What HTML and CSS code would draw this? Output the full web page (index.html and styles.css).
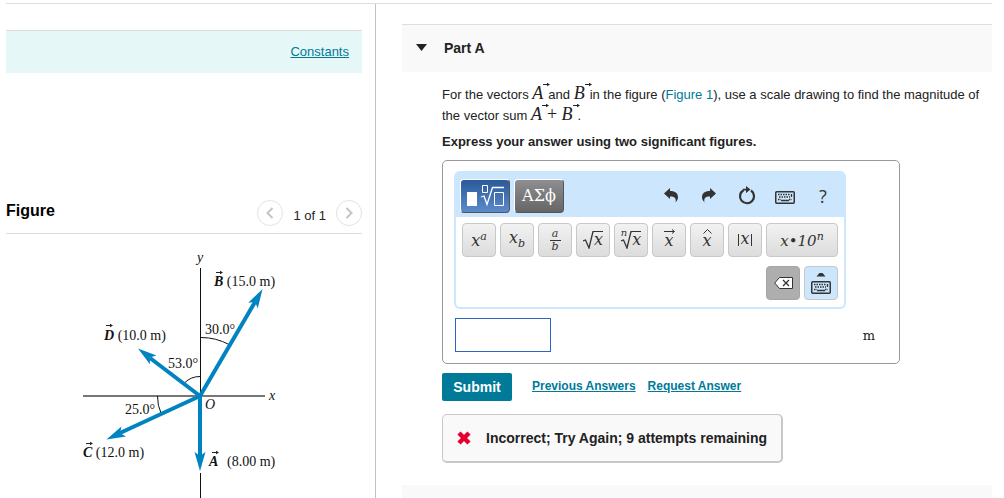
FILE: index.html
```
<!DOCTYPE html>
<html lang="en">
<head>
    <meta charset="UTF-8">
    <title>Part A</title>
    <link rel="stylesheet" href="styles.css">
</head>
<body>
    <svg class="symbols" aria-hidden="true">
        <symbol id="keyboard" viewBox="0 0 20 13">
            <rect x="0.75" y="0.75" width="18.5" height="11.5" rx="1" fill="none" stroke="#333" stroke-width="1.5"/>
            <path d="M3 3.5h12M4 6h11M3 8.5h3M14 8.5h3" stroke="#333" stroke-width="1.5" stroke-dasharray="1.5 1"/>
            <path d="M6 9.5h8M16.5 3v3" stroke="#333" stroke-width="1.3"/>
        </symbol>
        <symbol id="undo" viewBox="0 0 14 15">
            <path d="M0 5.5 6 0v3c5.500 0 8 2.300 8 6.300 0 2-1 3.700-2.700 5.200.6-1.200.6-2.400.2-3.500C10.800 9.200 9 8.600 6 8.600V11z" fill="#333"/>
        </symbol>
        <symbol id="overarrow" viewBox="0 0 7 5">
            <path d="M0 2.500h6" stroke="#222" stroke-width="1" fill="none"/>
            <path d="M4 .8 7 2.500 4 4.200z" fill="#222"/>
        </symbol>
    </svg>

    <div class="page">
        <div class="left">
            <div class="toolbar"><a href="#constants">Constants</a></div>
            <div class="figureHeader">
                <h2>Figure</h2>
                <div class="pager">
                    <button type="button" aria-label="Previous figure"><svg width="8" height="12" viewBox="0 0 8 12"><path d="M6.500 1 1.500 6l5 5"/></svg></button>
                    <span>1 of 1</span>
                    <button type="button" aria-label="Next figure"><svg width="8" height="12" viewBox="0 0 8 12"><path d="M1.500 1l5 5-5 5"/></svg></button>
                </div>
            </div>
            <svg class="figure" id="figure1" width="220" height="264" viewBox="70 234 220 264" role="img" aria-label="Vectors A, B, C and D drawn from the origin">
                <!-- axes -->
                <path d="M83 396h182" stroke="#777" stroke-width="2"/>
                <path d="M200.500 268v128M200.500 473v25" stroke="#111"/>
                <!-- angle arcs -->
                <g fill="none" stroke="#111">
                    <path d="M201 337.500q15 0 28 7"/>
                    <path d="M200 376.500q-9 0-15 6"/>
                    <path d="M157.500 396q0 10 3.500 17"/>
                </g>
                <!-- vectors -->
                <g stroke="#0083c1" stroke-width="4" fill="none">
                    <path d="M200 396 255 302"/>
                    <path d="M200 396 150 358"/>
                    <path d="M200 396 120 433"/>
                    <path d="M200 396v62"/>
                </g>
                <g fill="#0083c1">
                    <path d="M0 0-19 5.500-15 0-19-5.500z" transform="translate(262.500 289) rotate(-60)"/>
                    <path d="M0 0-19 5.500-15 0-19-5.500z" transform="translate(138 348.500) rotate(217)"/>
                    <path d="M0 0-19 5.500-15 0-19-5.500z" transform="translate(106.500 439.500) rotate(155)"/>
                    <path d="M0 0-19 5.500-15 0-19-5.500z" transform="translate(200 471) rotate(90)"/>
                </g>
                <g class="figureText">
                    <text x="197" y="262" class="axis">y</text>
                    <text x="269" y="400" class="axis">x</text>
                    <text x="205" y="409" class="axis">O</text>
                    <text x="214" y="286"><tspan class="vec">B</tspan> (15.0 m)</text>
                    <text x="104" y="340"><tspan class="vec">D</tspan> (10.0 m)</text>
                    <text x="83" y="457"><tspan class="vec">C</tspan> (12.0 m)</text>
                    <text x="209" y="466"><tspan class="vec">A</tspan></text>
                    <text x="227" y="466">(8.00 m)</text>
                    <text x="205" y="334">30.0°</text>
                    <text x="168" y="368">53.0°</text>
                    <text x="125" y="414">25.0°</text>
                </g>
                <use href="#overarrow" x="216" y="270" width="7" height="5"/>
                <use href="#overarrow" x="106" y="323" width="7" height="5"/>
                <use href="#overarrow" x="86" y="441" width="7" height="5"/>
                <use href="#overarrow" x="212" y="450" width="7" height="5"/>
            </svg>
        </div>

        <div class="right">
            <div class="partHeader">
                <svg width="11" height="7" viewBox="0 0 11 7"><path d="M0 0h11L5.500 7z" fill="#222"/></svg>
                <h2>Part A</h2>
            </div>
            <div class="partBody">
                <p class="question">For the vectors <span class="mathVec">A<svg width="7" height="5"><use href="#overarrow" width="7" height="5"/></svg></span>and <span class="mathVec">B<svg width="7" height="5"><use href="#overarrow" width="7" height="5"/></svg></span>in the figure (<a href="#figure1">Figure 1</a>), use a scale drawing to find the magnitude of the vector sum <span class="mathVec">A<svg width="7" height="5"><use href="#overarrow" width="7" height="5"/></svg></span><span class="math">+ </span><span class="mathVec">B<svg width="7" height="5"><use href="#overarrow" width="7" height="5"/></svg></span>.</p>
                <p class="instructions">Express your answer using two significant figures.</p>

                <div class="answerBox">
                    <div class="mathTool">
                        <div class="mathBar">
                            <button type="button" class="tab active" aria-label="Templates">
                                <svg width="38" height="24" viewBox="0 0 38 24"><path d="M1 8h10v14H1z" fill="#fff"/><path d="M16.500 1.500h5v7h-5zM28.500 8.500h9v13h-9z" fill="none" stroke="#fff"/><path d="M15 13l3-1 3 8.500L26.500 3.500H38" fill="none" stroke="#fff" stroke-width="1.300"/></svg>
                            </button>
                            <button type="button" class="tab">ΑΣϕ</button>
                            <div class="actions">
                                <button type="button" aria-label="Undo"><svg width="14" height="15"><use href="#undo" width="14" height="15"/></svg></button>
                                <button type="button" aria-label="Redo"><svg class="flip" width="14" height="15"><use href="#undo" width="14" height="15"/></svg></button>
                                <button type="button" aria-label="Reset"><svg width="18" height="19" viewBox="0 0 18 19"><path d="M5.500 4.200A7 7 0 1 0 13 4.500" fill="none" stroke="#333" stroke-width="2.200"/><path d="M8 0l4.500 3.500L8 7V4.600H5V2.800h3z" fill="#333"/></svg></button>
                                <button type="button" aria-label="Keyboard shortcuts" class="low"><svg width="20" height="13"><use href="#keyboard" width="20" height="13"/></svg></button>
                                <button type="button" aria-label="Help" class="help">?</button>
                            </div>
                        </div>
                        <div class="keys">
                            <button type="button"><span>x<sup>a</sup></span></button>
                            <button type="button"><span>x<sub>b</sub></span></button>
                            <button type="button" class="fraction"><span>a</span><span>b</span></button>
                            <button type="button" class="root"><svg width="11" height="18" viewBox="0 0 11 18"><path d="M0 10l2.500-1 3.500 8L10 .5h1" fill="none" stroke="#333" stroke-width="1.300"/></svg><span class="radicand">x</span></button>
                            <button type="button" class="root"><small>n</small><svg width="11" height="18" viewBox="0 0 11 18"><path d="M0 10l2.500-1 3.500 8L10 .5h1" fill="none" stroke="#333" stroke-width="1.300"/></svg><span class="radicand">x</span></button>
                            <button type="button" class="accent"><svg width="11" height="5" viewBox="0 0 11 5"><path d="M0 2.500h10M8 .5l2.500 2L8 4.500" fill="none" stroke="#333"/></svg><span>x</span></button>
                            <button type="button" class="accent"><svg width="9" height="5" viewBox="0 0 9 5"><path d="M.5 4.500l4-4 4 4" fill="none" stroke="#333"/></svg><span>x</span></button>
                            <button type="button" class="abs"><span>x</span></button>
                            <button type="button" class="wide"><span>x•10<sup>n</sup></span></button>
                        </div>
                        <div class="keys end">
                            <button type="button" class="delete" aria-label="Delete"><svg width="19" height="12" viewBox="0 0 19 12"><path d="M.7 6 5.500.5h13v11h-13z" fill="#fff" stroke="#333"/><path d="M9 3l6 6M15 3l-6 6" stroke="#333" stroke-width="1.300"/></svg></button>
                            <button type="button" class="toggle" aria-label="Show keyboard"><svg width="20" height="22" viewBox="0 0 20 22"><path d="M5.500 4.500 8.500 1h3l3 3.500z" fill="#333"/><use href="#keyboard" y="9" width="20" height="13"/></svg></button>
                        </div>
                    </div>
                    <div class="answerRow">
                        <input type="text" id="answer" aria-label="Answer">
                        <label for="answer">m</label>
                    </div>
                </div>

                <div class="submitRow">
                    <button type="submit" class="submit">Submit</button>
                    <a href="#previous">Previous Answers</a>
                    <a href="#request">Request Answer</a>
                </div>
                <div class="feedback">
                    <svg width="14" height="14" viewBox="0 0 14 14"><path d="M2 2l10 10M12 2 2 12" stroke="#e4002b" stroke-width="4.500"/></svg>
                    <span>Incorrect; Try Again; 9 attempts remaining</span>
                </div>
            </div>
            <div class="nextPart"></div>
        </div>
    </div>
</body>
</html>
```
FILE: styles.css
```
* {
    box-sizing: border-box;
}
body {
    margin: 0;
    background: #fff;
    color: #222;
    font-family: "Liberation Sans", Arial, sans-serif;
    font-size: 13px;
}
h2, p {
    margin: 0;
}
a {
    color: #007a99;
}
button {
    padding: 0;
    font: inherit;
    color: inherit;
}
svg {
    flex: none;
}
.symbols {
    position: absolute;
    width: 0;
    height: 0;
}
.page {
    display: flex;
    min-height: calc(100vh - 3px);
    margin: 0 12px 0 6px;
    border-top: 1px solid #ddd;
}
body {
    padding-top: 3px;
}

/* Left column */
.left {
    flex: none;
    width: 370px;
    padding: 26px 13px 0 0;
    border-right: 1px solid #b9c4cd;
}
.toolbar {
    display: flex;
    align-items: center;
    justify-content: flex-end;
    height: 43px;
    padding: 0 13px 2px 0;
    border-top: 1px solid #ddd;
    background: #e5f7f6;
}
.figureHeader {
    display: flex;
    align-items: center;
    justify-content: space-between;
    height: 39px;
    margin-top: 122px;
    border-bottom: 1px solid #ddd;
}
.figureHeader h2 {
    padding-bottom: 6px;
    font-size: 16px;
    color: #000;
}
.pager {
    display: flex;
    align-items: center;
    gap: 10px;
    padding-bottom: 2px;
}
.pager span {
    padding-top: 4px;
}
.pager button {
    display: flex;
    align-items: center;
    justify-content: center;
    width: 26px;
    height: 26px;
    border: 1px solid #e3e3e3;
    border-radius: 50%;
    background: #fff;
}
.pager path {
    fill: none;
    stroke: #c4c4c4;
    stroke-width: 2;
}
.figure {
    display: block;
    margin-left: 64px;
}
.figureText {
    font-family: "Liberation Serif", "Times New Roman", serif;
    font-size: 14px;
    fill: #111;
}
.axis {
    font-style: italic;
}
.vec {
    font-weight: bold;
    font-style: italic;
}

/* Right column */
.right {
    display: flex;
    flex: 1;
    flex-direction: column;
    padding: 20px 0 0 26px;
}
.partHeader {
    display: flex;
    align-items: center;
    gap: 17px;
    height: 48px;
    padding: 0 0 2px 14px;
    border-top: 1px solid #ddd;
    background: #f9f9f9;
}
.partHeader h2 {
    font-size: 14px;
}
.partBody {
    padding: 12px 0 0 40px;
}
.question {
    line-height: 21px;
}
.question a {
    text-decoration: none;
}
.math, .mathVec {
    font-family: "Liberation Serif", "Times New Roman", serif;
    font-size: 18px;
    line-height: 1;
}
.mathVec {
    position: relative;
    padding-right: 5px;
    font-style: italic;
}
.mathVec svg {
    position: absolute;
    top: -1px;
    right: -2px;
}
.instructions {
    margin-top: 5px;
    line-height: 21px;
    font-weight: bold;
}
.answerBox {
    max-width: 458px;
    margin-top: 8px;
    padding: 10px 24px 11px 12px;
    border: 1px solid #999;
    border-radius: 5px;
}
.mathTool {
    max-width: 392px;
    margin-left: -1px;
    padding-bottom: 4px;
    border: 2px solid #cce6fd;
    border-top: 0;
    border-radius: 6px;
    font-family: "DejaVu Serif", serif;
    color: #333;
}
.mathBar {
    display: flex;
    align-items: center;
    gap: 4px;
    height: 46px;
    padding: 3px 2px 0 4px;
    border-radius: 4px 4px 0 0;
    background: #cce6fd;
}
.tab {
    display: flex;
    align-items: center;
    justify-content: center;
    width: 50px;
    height: 34px;
    border: 1px solid #fff;
    border-right-color: #555;
    border-bottom-color: #555;
    border-radius: 4px;
    background: linear-gradient(#8e8e92, #666);
    color: #fff;
    font-size: 16px;
}
.tab.active {
    background: linear-gradient(#2b5a9c, #5b8bc9);
}
.actions {
    display: flex;
    margin-left: auto;
    height: 34px;
}
.actions button {
    display: flex;
    align-items: center;
    justify-content: center;
    width: 38px;
    border: 0;
    background: none;
}
.actions .low {
    padding-top: 3px;
}
.actions .help {
    font-family: "Open Sans", sans-serif;
    font-size: 18px;
}
.flip {
    transform: scaleX(-1);
}
.keys {
    display: flex;
    gap: 4px;
    padding: 6px 6px 3px;
}
.keys.end {
    justify-content: flex-end;
}
.keys button {
    display: flex;
    align-items: center;
    justify-content: center;
    width: 34px;
    height: 34px;
    border: 1px solid #c8c8c8;
    border-radius: 4px;
    background: linear-gradient(#f2f2f2, #dcdcdc);
    font-size: 16px;
    font-style: italic;
    line-height: 16px;
}
.keys sup, .keys sub {
    font-size: 11px;
    line-height: 1;
}
.keys .fraction {
    flex-direction: column;
    font-size: 11px;
    line-height: 12px;
}
.fraction span:first-child {
    width: 11px;
    border-bottom: 1px solid #333;
}
.radicand {
    height: 18px;
    border-top: 1px solid #333;
}
.root small {
    align-self: flex-start;
    margin: 3px -6px 0 0;
    font-size: 10px;
    line-height: 12px;
}
.keys .accent {
    flex-direction: column;
    padding-bottom: 3px;
}
.accent span {
    line-height: 14px;
}
.abs span {
    padding: 0 1px 2px;
    border: solid #333;
    border-width: 0 1px;
    line-height: 10px;
}
.keys .wide {
    width: 72px;
    font-size: 15px;
}
.keys .delete {
    border-color: #a5a5a5;
    background: #aeaeae;
}
.keys .toggle {
    background: #cce6fd;
}
.answerRow {
    display: flex;
    align-items: center;
    justify-content: space-between;
    margin-top: 9px;
}
.answerRow input {
    width: 96px;
    height: 34px;
    border: 1px solid #2b66c0;
}
.answerRow label {
    font-family: "DejaVu Serif", serif;
}
.submitRow {
    display: flex;
    align-items: center;
    gap: 12px;
    margin-top: 9px;
    font-size: 12px;
    font-weight: bold;
}
.submitRow a {
    padding-bottom: 2px;
}
.submit {
    width: 70px;
    height: 28px;
    margin-right: 8px;
    border: 0;
    border-radius: 2px;
    background: #007a99;
    color: #fff;
    font-size: 14px;
}
.feedback {
    display: flex;
    align-items: center;
    gap: 15px;
    max-width: 341px;
    height: 49px;
    margin-top: 13px;
    padding-left: 14px;
    border: 1px solid #c8c8c8;
    border-width: 1px 2px 2px 1px;
    border-radius: 5px;
    background: #f9f9f9;
    font-size: 14px;
    font-weight: bold;
}
.nextPart {
    flex: 1;
    margin-top: 22px;
    background: #f9f9f9;
}
```
